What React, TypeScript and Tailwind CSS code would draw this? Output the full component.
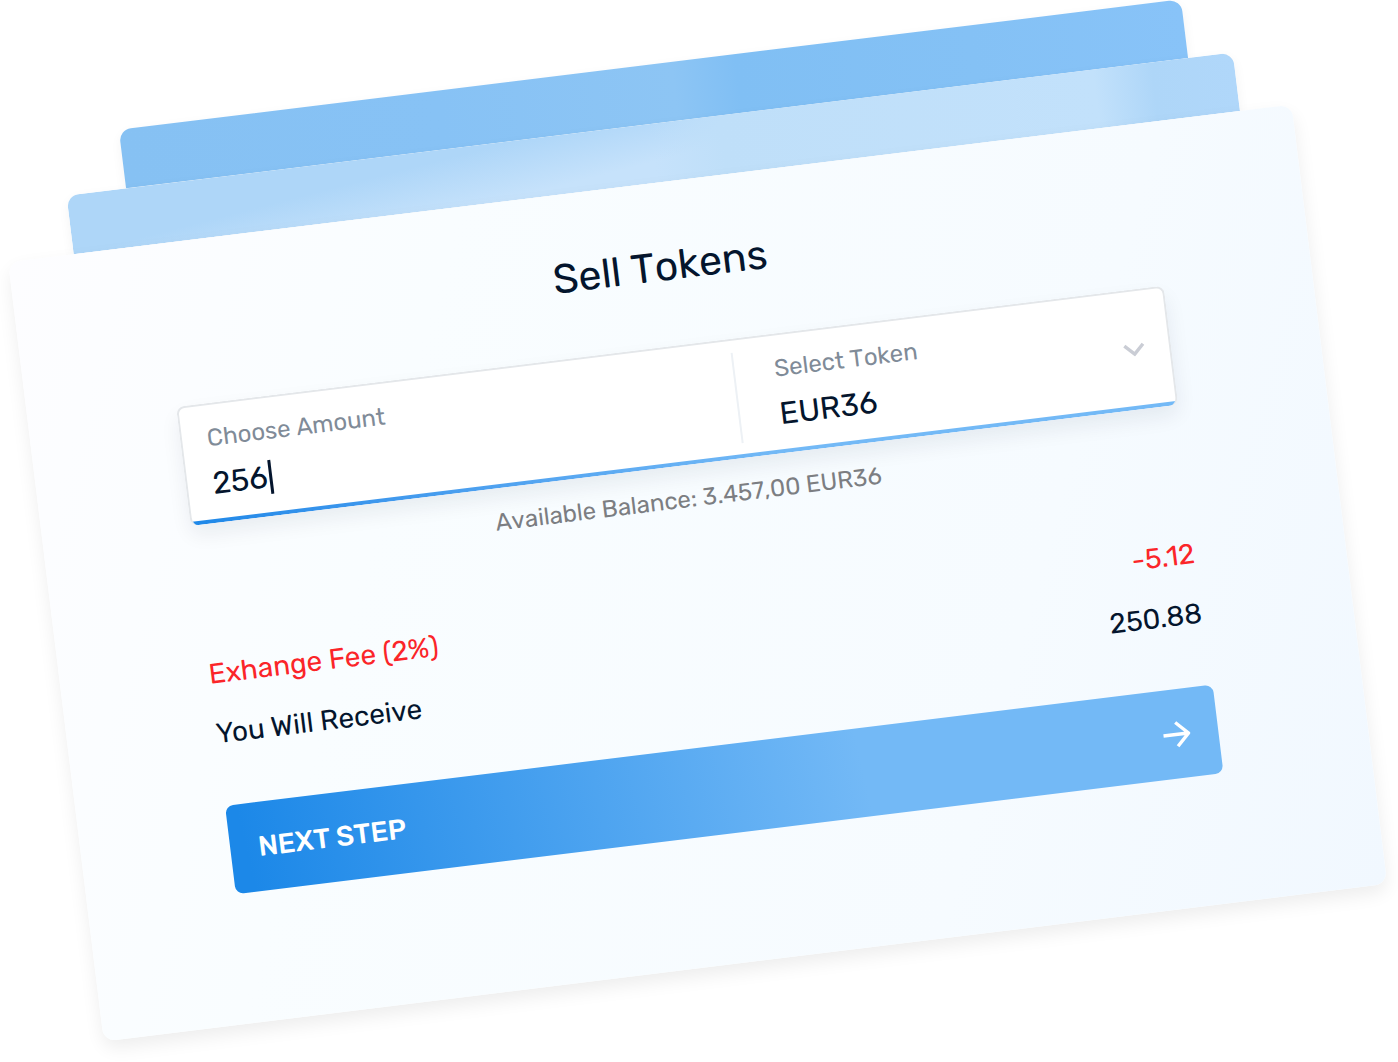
import { useState } from "react";

function Chevron() {
  return (
    <svg width="22" height="14" viewBox="0 0 22 14" fill="none" aria-hidden="true">
      <path d="M1.6 2.2L11 11.4l9.4-9.2" stroke="#cacdd5" strokeWidth="3.4" />
    </svg>
  );
}

function Arrow() {
  return (
    <svg width="28" height="28" viewBox="0 0 28 28" fill="none" aria-hidden="true">
      <path d="M1 14h25M14.2 2l12 12-12 12" stroke="#fff" strokeWidth="3.4" />
    </svg>
  );
}

export default function App() {
  const [amount, setAmount] = useState("256");
  return (
    <main className="min-h-screen overflow-hidden bg-white pt-[63px] pr-[61px] pl-[44px] font-['Rubik','Inter',sans-serif] text-[#04152d] [font-kerning:none]">
      <div className="-rotate-7">
        <div className="mr-[97px] ml-[126px] h-[59px] rounded-t-xl bg-[linear-gradient(90deg,#86c1f3_0%,#87c2f5_30%,#8dc5f4_52%,#80bff4_58%,#84c1f5_80%,#88c3f8_100%)] shadow-[0_4px_12px_rgba(0,0,0,0.05)]" />
        <div className="relative mr-[52px] ml-[66px] h-[59px] rounded-t-xl bg-[linear-gradient(90deg,transparent_50%,#bfdff9_56%,#c2e1fb_88%,#aed6f8_93%,#b0d7fa_100%),linear-gradient(172.5deg,#aed6f8_28%,#c6e2fb_54%)] shadow-[0_4px_12px_rgba(0,0,0,0.05)]" />
        <form
          onSubmit={(e) => e.preventDefault()}
          className="relative rounded-xl bg-[linear-gradient(112deg,#fdfdff_0%,#f9fdff_28%,#f6fbff_72%,#f1f8ff_100%)] px-[149px] pt-[58px] pb-[130px] shadow-[0_8px_18px_rgba(0,0,0,0.07)]"
        >
          <h1 className="text-center text-[41px] leading-[52px]">Sell Tokens</h1>

          <div className="relative mt-[54px] grid h-[120px] grid-cols-[556fr_2px_434fr] overflow-hidden rounded-lg border-2 border-b-0 border-[#e4e7ea] bg-white shadow-[0_10px_20px_rgba(10,30,60,0.07)]">
            <div className="flex flex-col pt-[17px] pl-[25px]">
              <label htmlFor="amount" className="text-2xl leading-8 text-[#808b98]">
                Choose Amount
              </label>
              <div className="mt-2.5 flex h-10 items-center gap-0.5">
                <input
                  id="amount"
                  value={amount}
                  onChange={(e) => setAmount(e.target.value)}
                  className="field-sizing-content bg-transparent text-[31px] leading-10 outline-none"
                />
                <span className="h-[34px] w-[3px] bg-[#04152d]" />
              </div>
            </div>
            <div className="mt-3 h-[91px] bg-[#edf1f5]" />
            <div className="relative flex flex-col pt-[17px] pl-[39px]">
              <label htmlFor="token" className="text-2xl leading-8 text-[#808b98]">
                Select Token
              </label>
              <select
                id="token"
                className="mt-2.5 h-10 appearance-none bg-transparent text-[31px] leading-10 outline-none"
              >
                <option>EUR36</option>
              </select>
              <span className="pointer-events-none absolute top-[51px] right-6">
                <Chevron />
              </span>
            </div>
            <div className="absolute inset-x-0 bottom-0 h-[4px] bg-linear-to-r from-[#1e88e8] to-[#73b9f6] to-60%" />
          </div>

          <p className="mt-[18px] text-center text-2xl leading-8 text-[#7c7e82]">Available Balance: 3.457,00 EUR36</p>

          <dl className="mt-[82px] pr-0.5 text-[28px] leading-9 [font-kerning:normal]">
            <div className="flex justify-between text-[#fb2529]">
              <dt>Exhange Fee (2%)</dt>
              <dd>-5.12</dd>
            </div>
            <div className="mt-6 flex justify-between">
              <dt>You Will Receive</dt>
              <dd>250.88</dd>
            </div>
          </dl>

          <button
            type="submit"
            className="mt-[54px] flex h-[89px] w-full items-center justify-between rounded-lg bg-[linear-gradient(84deg,#1c88e8_2%,#73b9f6_64%)] px-7 text-[28px] font-medium text-white [font-kerning:normal]"
          >
            NEXT STEP
            <Arrow />
          </button>
        </form>
      </div>
    </main>
  );
}
